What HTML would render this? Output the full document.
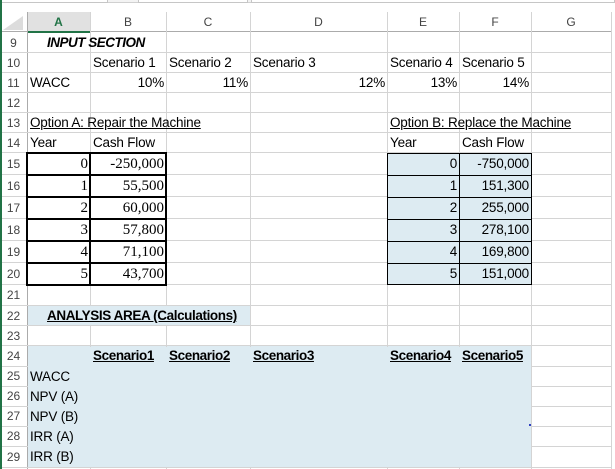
<!DOCTYPE html>
<html><head><meta charset="utf-8"><style>
*{margin:0;padding:0;box-sizing:border-box}
body{width:615px;height:469px;overflow:hidden;background:#fff;position:relative;font-family:"Liberation Sans",sans-serif;font-size:13.5px;color:#000}
div{position:absolute}
.v{width:1px;background:#d4d4d4;top:12px;bottom:0}
.h{height:1px;background:#d4d4d4;left:0;width:611px}
.t{white-space:nowrap;line-height:20px;height:20px;letter-spacing:-0.2px}
.r{text-align:right}
.rh{left:0;width:27px;text-align:center;color:#444;font-size:12px;white-space:nowrap;letter-spacing:0}
.ch{top:12px;height:20px;line-height:20px;text-align:center;color:#444;font-size:12px}
.tm{font-family:"Liberation Serif",serif;font-size:15px;line-height:22px;height:22px}
.u{text-decoration:underline}
.b{font-weight:bold}
</style></head><body>
<div style="left:0;top:0;width:615px;height:3px;background:#f3f3f3;border-bottom:1px solid #d0d0d0"></div>
<div style="left:0;top:0;width:108px;height:3px;border:1px solid #c6c6c6;border-top:none;background:#fff"></div>
<div style="left:138px;top:0;width:110px;height:3px;border:1px solid #c6c6c6;border-top:none;background:#fff"></div>
<div style="left:251px;top:0;width:364px;height:3px;border:1px solid #c6c6c6;border-top:none;background:#fff"></div>
<div style="left:0;top:12px;width:611px;height:20px;background:#fff;border-bottom:1px solid #ababab"></div>
<div style="left:3px;top:16px;width:0;height:0;border-left:20px solid transparent;border-bottom:14px solid #dcdcdc"></div>
<div style="left:27px;top:12px;width:63px;height:21px;background:#e1e1e1;border-bottom:2px solid #217346"></div>
<div style="left:27px;top:306px;width:223px;height:20px;background:#ddebf2"></div>
<div style="left:27px;top:346px;width:504px;height:121px;background:#ddebf2"></div>
<div class="v" style="left:27px;background:#ababab"></div>
<div class="v" style="left:90px"></div>
<div class="v" style="left:166px"></div>
<div class="v" style="left:250px"></div>
<div class="v" style="left:387px"></div>
<div class="v" style="left:459px"></div>
<div class="v" style="left:531px"></div>
<div class="v" style="left:611px"></div>
<div class="h" style="top:52px"></div><div class="h" style="top:72px"></div><div class="h" style="top:92px"></div>
<div class="h" style="top:112px"></div><div class="h" style="top:132px"></div><div class="h" style="top:152px"></div>
<div class="h" style="top:174px"></div><div class="h" style="top:196px"></div><div class="h" style="top:218px"></div>
<div class="h" style="top:240px"></div><div class="h" style="top:262px"></div><div class="h" style="top:284px"></div>
<div class="h" style="top:305px"></div><div class="h" style="top:325px"></div><div class="h" style="top:345px"></div>
<div class="h" style="top:366px"></div><div class="h" style="top:386px"></div><div class="h" style="top:406px"></div>
<div class="h" style="top:426px"></div><div class="h" style="top:446px"></div><div class="h" style="top:467px"></div>
<div style="left:28px;top:347px;width:503px;height:120px;background:#ddebf2"></div>
<div style="left:28px;top:306px;width:222px;height:19px;background:#ddebf2"></div>
<div style="left:0;top:0;width:2px;height:469px;background:#217346"></div>
<div class="ch b" style="left:27px;width:63px;color:#217346">A</div>
<div class="ch" style="left:90px;width:76px">B</div>
<div class="ch" style="left:166px;width:84px">C</div>
<div class="ch" style="left:250px;width:137px">D</div>
<div class="ch" style="left:387px;width:72px">E</div>
<div class="ch" style="left:459px;width:72px">F</div>
<div class="ch" style="left:531px;width:80px">G</div>
<div class="rh t" style="top:33px">9</div><div class="rh t" style="top:53px">10</div><div class="rh t" style="top:73px">11</div>
<div class="rh t" style="top:93px">12</div><div class="rh t" style="top:113px">13</div><div class="rh t" style="top:133px">14</div>
<div class="rh t" style="top:154px">15</div><div class="rh t" style="top:176px">16</div><div class="rh t" style="top:198px">17</div>
<div class="rh t" style="top:220px">18</div><div class="rh t" style="top:242px">19</div><div class="rh t" style="top:264px">20</div>
<div class="rh t" style="top:285px">21</div><div class="rh t" style="top:306px">22</div><div class="rh t" style="top:326px">23</div>
<div class="rh t" style="top:346px">24</div><div class="rh t" style="top:366px">25</div><div class="rh t" style="top:386px">26</div>
<div class="rh t" style="top:406px">27</div><div class="rh t" style="top:426px">28</div><div class="rh t" style="top:447px">29</div>
<div class="t b" style="left:47px;top:33px;font-style:italic;letter-spacing:-0.5px">INPUT SECTION</div>
<div class="t" style="left:93px;top:53px">Scenario 1</div>
<div class="t" style="left:169px;top:53px">Scenario 2</div>
<div class="t" style="left:253px;top:53px">Scenario 3</div>
<div class="t" style="left:390px;top:53px">Scenario 4</div>
<div class="t" style="left:462px;top:53px">Scenario 5</div>
<div class="t" style="left:30px;top:73px">WACC</div>
<div class="t r" style="left:90px;width:74px;top:73px">10%</div>
<div class="t r" style="left:166px;width:82px;top:73px">11%</div>
<div class="t r" style="left:250px;width:135px;top:73px">12%</div>
<div class="t r" style="left:387px;width:70px;top:73px">13%</div>
<div class="t r" style="left:459px;width:70px;top:73px">14%</div>
<div class="t u" style="left:30px;top:113px">Option A: Repair the Machine</div>
<div class="t u" style="left:390px;top:113px">Option B: Replace the Machine</div>
<div class="t" style="left:30px;top:133px">Year</div>
<div class="t" style="left:93px;top:133px">Cash Flow</div>
<div class="t" style="left:390px;top:133px">Year</div>
<div class="t" style="left:462px;top:133px">Cash Flow</div>
<div style="left:387px;top:153px;width:145px;height:132px;background:#ddebf2;border:1px solid #000"></div>
<div style="left:459px;top:153px;width:1px;height:132px;background:#000"></div>
<div style="left:387px;top:175px;width:145px;height:1px;background:#000"></div>
<div style="left:387px;top:197px;width:145px;height:1px;background:#000"></div>
<div style="left:387px;top:219px;width:145px;height:1px;background:#000"></div>
<div style="left:387px;top:241px;width:145px;height:1px;background:#000"></div>
<div style="left:387px;top:263px;width:145px;height:1px;background:#000"></div>
<div style="left:26px;top:152px;width:141px;height:134px;border:2px solid #000"></div>
<div style="left:89px;top:152px;width:2px;height:134px;background:#000"></div>
<div style="left:26px;top:174px;width:141px;height:2px;background:#000"></div>
<div style="left:26px;top:196px;width:141px;height:2px;background:#000"></div>
<div style="left:26px;top:218px;width:141px;height:2px;background:#000"></div>
<div style="left:26px;top:240px;width:141px;height:2px;background:#000"></div>
<div style="left:26px;top:262px;width:141px;height:2px;background:#000"></div>
<div class="tm r" style="left:28px;width:60px;top:153px">0</div>
<div class="tm r" style="left:28px;width:60px;top:175px">1</div>
<div class="tm r" style="left:28px;width:60px;top:197px">2</div>
<div class="tm r" style="left:28px;width:60px;top:219px">3</div>
<div class="tm r" style="left:28px;width:60px;top:241px">4</div>
<div class="tm r" style="left:28px;width:60px;top:263px">5</div>
<div class="tm r" style="left:91px;width:73px;top:153px">-250,000</div>
<div class="tm r" style="left:91px;width:73px;top:175px">55,500</div>
<div class="tm r" style="left:91px;width:73px;top:197px">60,000</div>
<div class="tm r" style="left:91px;width:73px;top:219px">57,800</div>
<div class="tm r" style="left:91px;width:73px;top:241px">71,100</div>
<div class="tm r" style="left:91px;width:73px;top:263px">43,700</div>
<div class="t r" style="left:387px;width:70px;top:154px">0</div>
<div class="t r" style="left:387px;width:70px;top:176px">1</div>
<div class="t r" style="left:387px;width:70px;top:198px">2</div>
<div class="t r" style="left:387px;width:70px;top:220px">3</div>
<div class="t r" style="left:387px;width:70px;top:242px">4</div>
<div class="t r" style="left:387px;width:70px;top:264px">5</div>
<div class="t r" style="left:459px;width:70px;top:154px">-750,000</div>
<div class="t r" style="left:459px;width:70px;top:176px">151,300</div>
<div class="t r" style="left:459px;width:70px;top:198px">255,000</div>
<div class="t r" style="left:459px;width:70px;top:220px">278,100</div>
<div class="t r" style="left:459px;width:70px;top:242px">169,800</div>
<div class="t r" style="left:459px;width:70px;top:264px">151,000</div>
<div class="t b u" style="left:47px;top:306px;letter-spacing:-0.4px">ANALYSIS AREA (Calculations)</div>
<div class="t b u" style="left:93px;top:346px;letter-spacing:-0.4px">Scenario1</div>
<div class="t b u" style="left:169px;top:346px;letter-spacing:-0.4px">Scenario2</div>
<div class="t b u" style="left:253px;top:346px;letter-spacing:-0.4px">Scenario3</div>
<div class="t b u" style="left:390px;top:346px;letter-spacing:-0.4px">Scenario4</div>
<div class="t b u" style="left:462px;top:346px;letter-spacing:-0.4px">Scenario5</div>
<div class="t" style="left:30px;top:367px">WACC</div>
<div class="t" style="left:30px;top:387px">NPV (A)</div>
<div class="t" style="left:30px;top:407px">NPV (B)</div>
<div class="t" style="left:30px;top:427px">IRR (A)</div>
<div class="t" style="left:30px;top:447px">IRR (B)</div>
<div style="left:529px;top:424px;width:2px;height:2px;background:#3040c0"></div>
</body></html>
